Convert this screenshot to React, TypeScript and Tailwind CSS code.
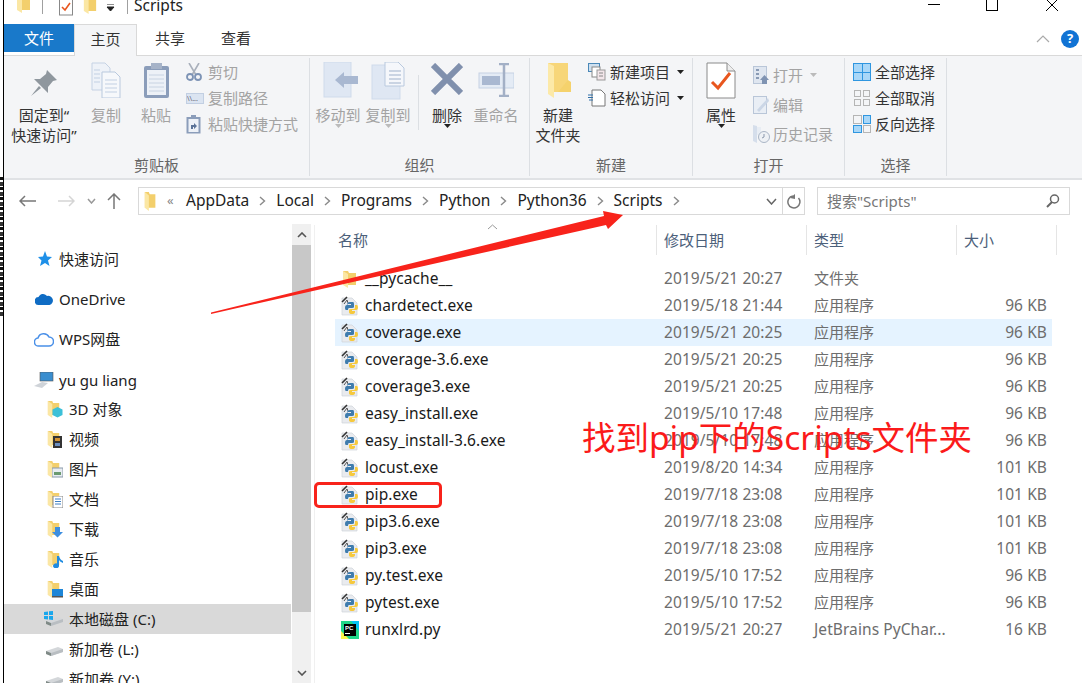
import type { ReactNode } from "react";

const FONT = "font-['Noto_Sans','Noto_Sans_CJK_SC',sans-serif]";

function Folder({ className = "w-[16px] h-[18px]" }: { className?: string }) {
  return (
    <svg className={className} viewBox="0 0 16 18" preserveAspectRatio="none">
      <path d="M1 1 L6 1 L7 3 L14 3 L14 15 L1 15 Z" fill="#f3cf6c" />
      <path d="M1 1 L6 4 L6 18 L1 15 Z" fill="#fbe7a4" />
    </svg>
  );
}

function PyIcon() {
  return (
    <svg className="w-[18px] h-[20px] shrink-0" viewBox="0 0 18 20">
      <path d="M1 2 H11 L16 7 V19 H1 Z" fill="#e9ebef" stroke="#cfd3d9" strokeWidth="0.7" />
      <path d="M1 6 L6 1" stroke="#333" strokeWidth="1.6" />
      <path d="M3 8 L6 4 L7 7" stroke="#555" strokeWidth="1" fill="none" />
      <path d="M6 9 Q6 6 9 6 H12 Q13 6 13 8 V11 Q13 12 11 12 H8 Q7 12 7 14 H5 Q4 14 4 12 Q4 9 6 9 H10 V8 H7" fill="#3f7cad" />
      <path d="M16 9 Q17 9 17 12 Q17 14 15 14 H11 V15 H14 V16 Q14 18 11 18 Q8 18 8 16 V14 Q8 13 10 13 H13 Q14 13 14 11 V9 Z" fill="#f6c93e" />
    </svg>
  );
}

function PcIcon() {
  return (
    <svg className="w-[18px] h-[18px] shrink-0" viewBox="0 0 18 18">
      <rect width="18" height="18" fill="#21d789" />
      <path d="M10 0 H18 V10 Z" fill="#07c3f2" />
      <path d="M0 10 L8 18 H0 Z" fill="#fcf84a" />
      <rect x="3" y="3" width="12" height="12" fill="#000" />
      <text x="4" y="9" fontSize="6" fontWeight="700" fill="#fff" fontFamily="Liberation Sans, sans-serif">PC</text>
      <rect x="4" y="12" width="5" height="1" fill="#fff" />
    </svg>
  );
}

function Big({ w, icon, lines, dim, caret }: { w: string; icon: ReactNode; lines: string[]; dim?: boolean; caret?: "dim" | "dark" }) {
  return (
    <div className={`${w} mt-[2px] flex flex-col items-center shrink-0`}>
      <div className="h-[43px] w-full flex items-start justify-center">{icon}</div>
      {lines.map((l) => (
        <div key={l} className={`h-[20px] leading-[20px] whitespace-nowrap text-[15px] ${dim ? "text-[#a3a3a3]" : "text-[#333]"}`}>{l}</div>
      ))}
      {caret && (
        <svg className="w-[7px] h-[4px] -mt-[1px]" viewBox="0 0 7 4">
          <path d="M0 0 H7 L3.5 4 Z" fill={caret === "dim" ? "#bbb" : "#222"} />
        </svg>
      )}
    </div>
  );
}

function Small({ icon, label, dim, slot, h, caret }: { icon: ReactNode; label: string; dim?: boolean; slot: string; h: string; caret?: "dim" | "dark" }) {
  return (
    <div className={`${h} flex items-center whitespace-nowrap text-[15px] ${dim ? "text-[#a3a3a3]" : "text-[#333]"}`}>
      <div className={`${slot} shrink-0 flex items-center`}>{icon}</div>
      <span>{label}</span>
      {caret && (
        <svg className="w-[7px] h-[4px] ml-[7px]" viewBox="0 0 7 4">
          <path d="M0 0 H7 L3.5 4 Z" fill={caret === "dim" ? "#bbb" : "#222"} />
        </svg>
      )}
    </div>
  );
}

function Group({ w, label, children }: { w: string; label: string; children: ReactNode }) {
  return (
    <div className={`${w} shrink-0 h-[118px] mt-[2px] border-r border-[#dcdfe3] flex flex-col`}>
      <div className="h-[97px] pt-[2px] flex">{children}</div>
      <div className="h-[20px] leading-[20px] text-center text-[15px] text-[#666]">{label}</div>
    </div>
  );
}

function Sep() {
  return (
    <svg className="w-[7px] h-[10px] mx-[10px] shrink-0" viewBox="0 0 7 10">
      <path d="M1 1 L5.5 5 L1 9" fill="none" stroke="#8a8a8a" strokeWidth="1.4" />
    </svg>
  );
}

const FILES = [
  { n: "__pycache__", d: "2019/5/21 20:27", t: "文件夹", s: "", kind: "folder" },
  { n: "chardetect.exe", d: "2019/5/18 21:44", t: "应用程序", s: "96 KB" },
  { n: "coverage.exe", d: "2019/5/21 20:25", t: "应用程序", s: "96 KB", hl: true },
  { n: "coverage-3.6.exe", d: "2019/5/21 20:25", t: "应用程序", s: "96 KB" },
  { n: "coverage3.exe", d: "2019/5/21 20:25", t: "应用程序", s: "96 KB" },
  { n: "easy_install.exe", d: "2019/5/10 17:48", t: "应用程序", s: "96 KB" },
  { n: "easy_install-3.6.exe", d: "2019/5/10 17:48", t: "应用程序", s: "96 KB" },
  { n: "locust.exe", d: "2019/8/20 14:34", t: "应用程序", s: "101 KB" },
  { n: "pip.exe", d: "2019/7/18 23:08", t: "应用程序", s: "101 KB" },
  { n: "pip3.6.exe", d: "2019/7/18 23:08", t: "应用程序", s: "101 KB" },
  { n: "pip3.exe", d: "2019/7/18 23:08", t: "应用程序", s: "101 KB" },
  { n: "py.test.exe", d: "2019/5/10 17:52", t: "应用程序", s: "96 KB" },
  { n: "pytest.exe", d: "2019/5/10 17:52", t: "应用程序", s: "96 KB" },
  { n: "runxlrd.py", d: "2019/5/21 20:27", t: "JetBrains PyChar...", s: "16 KB", kind: "pc" },
];

function Badge({ children }: { children: ReactNode }) {
  return <svg className="absolute left-[5px] top-[6px] w-[11px] h-[12px]" viewBox="0 0 11 12">{children}</svg>;
}

const LIBS: { label: string; badge: ReactNode }[] = [
  { label: "3D 对象", badge: <path d="M5.5 1 L10.5 3.5 V9 L5.5 11.5 L.5 9 V3.5 Z" fill="#3cc0d8" /> },
  { label: "视频", badge: <><rect x="1" y="0" width="9" height="12" fill="#333" /><rect x="3" y="2" width="5" height="3" fill="#d09030" /><rect x="3" y="7" width="5" height="3" fill="#6a8ec0" /></> },
  { label: "图片", badge: <><rect x="0" y="2" width="11" height="9" fill="#e8edf2" stroke="#8a99aa" /><rect x="2" y="6" width="7" height="3" fill="#6a9a70" /></> },
  { label: "文档", badge: <><rect x="1" y="0" width="10" height="12" fill="#fff" stroke="#888" /><path d="M3 3 H9 M3 5.5 H9 M3 8 H9" stroke="#3d7fc4" /></> },
  { label: "下载", badge: <path d="M3 1 H8 V6 H11 L5.5 11.5 L0 6 H3 Z" fill="#3c8ee0" /> },
  { label: "音乐", badge: <path d="M5 0 H7 Q8 4 11 5 V7 Q8 6 7 4 V9.5 A3 2.5 0 1 1 5 7.5 Z" fill="#1f8be0" /> },
  { label: "桌面", badge: <><rect x="0" y="3" width="11" height="7" fill="#1d86d8" /><rect x="0" y="10" width="11" height="1.5" fill="#555" /></> },
];

function Drive({ win }: { win?: boolean }) {
  return (
    <svg className="w-[20px] h-[16px] shrink-0" viewBox="0 0 20 16">
      <path d="M2 10 L14 6 L19 8 V11 L7 15 L2 13 Z" fill="#d4d7da" />
      <path d="M2 10 L7 12 V15 L2 13 Z" fill="#7f8a86" />
      <path d="M7 12 L19 8 V11 L7 15 Z" fill="#b9bec2" />
      {win && <path d="M0 1 L4 .5 V4 H0 Z M5 .3 L9 0 V4 H5 Z M0 5 H4 V8.5 L0 8 Z M5 5 H9 V9 L5 8.6 Z" fill="#1aa7ec" />}
    </svg>
  );
}

export default function App() {
  return (
    <div className={`${FONT} relative w-[1082px] h-[683px] overflow-hidden bg-white flex`}>
      {/* bit of the desktop left of the window */}
      <div className="w-[4px] shrink-0 border-r border-black flex flex-col">
        <div className="h-[177px]" />
        <div className="h-[140px] w-[3px] bg-[repeating-linear-gradient(180deg,#111_0px,#111_3px,#fff_3px,#fff_5px,#333_5px,#333_9px,#fff_9px,#fff_10px)]" />
      </div>

      <div className="flex-1 min-w-0 flex flex-col">
        {/* title bar */}
        <div className="h-[24px] shrink-0 overflow-hidden flex items-start relative">
          <Folder className="ml-[12px] -mt-[5px] w-[16px] h-[18px]" />
          <div className="ml-[10px] w-px h-[14px] bg-[#a0a0a0]" />
          <svg className="ml-[16px] w-[14px] h-[16px]" viewBox="0 0 14 16">
            <rect x=".5" y="-2" width="13" height="17" fill="#fff" stroke="#888" />
            <path d="M3 7 L6 10 L11 3" fill="none" stroke="#e8561e" strokeWidth="1.6" />
          </svg>
          <Folder className="ml-[10px] -mt-[4px] w-[15px] h-[18px]" />
          <svg className="ml-[8px] mt-[4px] w-[9px] h-[7px]" viewBox="0 0 9 7">
            <path d="M1 0 H8 M1 3 H8 L4.5 7 Z" stroke="#222" fill="#222" />
          </svg>
          <div className="ml-[12px] w-px h-[14px] bg-[#a0a0a0]" />
          <div className="ml-[6px] -mt-[5px] text-[15.5px] leading-[20px] text-[#222]">Scripts</div>
          <div className="ml-auto flex items-start">
            <div className="w-[12px] h-px bg-black mt-[4px] mr-[46px]" />
            <div className="w-[12px] h-[11px] border border-black border-t-0 mr-[48px]" />
            <svg className="w-[12px] h-[12px] -mt-[1px] mr-[24px]" viewBox="0 0 12 12">
              <path d="M0 0 L12 12 M12 0 L0 12" stroke="#000" strokeWidth="1" />
            </svg>
          </div>
        </div>

        {/* tabs */}
        <div className="h-[32px] shrink-0 flex items-start text-[15px] text-[#333] relative border-b border-[#d9d9d9]">
          <div className="w-[70px] h-[28px] bg-[#1979ca] text-white flex items-center justify-center">文件</div>
          <div className="w-[63px] h-[32px] bg-[#f4f5f7] border border-b-0 border-[#d9d9d9] flex items-center justify-center pb-[3px]">主页</div>
          <div className="w-[66px] h-[28px] flex items-center justify-center">共享</div>
          <div className="w-[66px] h-[28px] flex items-center justify-center">查看</div>
          <div className="ml-auto flex items-center h-[30px] mr-[3px]">
            <svg className="w-[14px] h-[8px] mr-[11px]" viewBox="0 0 14 8">
              <path d="M1 7 L7 1 L13 7" fill="none" stroke="#aaa" strokeWidth="1.2" />
            </svg>
            <div className="w-[18px] h-[18px] rounded-full bg-[#1173d4] text-white text-[13px] font-bold flex items-center justify-center">?</div>
          </div>
        </div>

        {/* ribbon */}
        <div className="h-[124px] shrink-0 bg-[#f4f5f7] border-b-2 border-[#e0e2e5] flex">
          <Group w="w-[306px]" label="剪贴板">
            <Big
              w="w-[80px]"
              lines={["固定到“", "快速访问”"]}
              icon={
                <svg className="w-[28px] h-[28px] mt-[7px]" viewBox="0 0 28 28">
                  <path d="M17 1 L27 11 L23 12 L18 18 L18 24 L4 10 L10 10 L16 5 Z" fill="#8f979e" />
                  <path d="M9 17 L1 27 L11 19 Z" fill="#8f979e" />
                </svg>
              }
            />
            <Big
              w="w-[44px]"
              dim
              lines={["复制"]}
              icon={
                <svg className="w-[30px] h-[36px]" viewBox="0 0 30 36">
                  <path d="M1 1 H14 L19 6 V28 H1 Z" fill="#eef2f8" stroke="#c5d2e4" />
                  <path d="M11 10 H24 L29 15 V36 H11 Z" fill="#f6f8fb" stroke="#b9c9de" />
                  <path d="M14 18 H26 M14 22 H26 M14 26 H26 M14 30 H26 M3 8 H9 M3 12 H9 M3 16 H9 M3 20 H9" stroke="#c2d0e3" />
                </svg>
              }
            />
            <Big
              w="w-[56px]"
              dim
              lines={["粘贴"]}
              icon={
                <svg className="w-[27px] h-[37px]" viewBox="0 0 27 37">
                  <rect x="1" y="4" width="25" height="32" rx="2" fill="#8b9dba" />
                  <rect x="4" y="8" width="19" height="25" fill="#edf1f7" />
                  <rect x="8" y="1" width="11" height="6" fill="#a6b3c8" />
                  <path d="M6 13 H21 M6 17 H21 M6 21 H21 M6 25 H21 M6 29 H21" stroke="#c8d3e2" />
                </svg>
              }
            />
            <div className="ml-[2px] -mt-[1px] flex flex-col">
              <Small
                dim
                slot="w-[22px]"
                h="h-[26px]"
                label="剪切"
                icon={
                  <svg className="w-[16px] h-[18px]" viewBox="0 0 16 18">
                    <path d="M3 0 L10 12 M13 0 L6 12" stroke="#a9b0bb" strokeWidth="1.6" />
                    <circle cx="4" cy="14" r="3" fill="none" stroke="#7d93b5" strokeWidth="1.8" />
                    <circle cx="12" cy="14" r="3" fill="none" stroke="#7d93b5" strokeWidth="1.8" />
                  </svg>
                }
              />
              <Small
                dim
                slot="w-[22px]"
                h="h-[26px]"
                label="复制路径"
                icon={
                  <div className="w-[18px] h-[11px] bg-[#dbe4f1] border border-[#c2cfe2] text-[7px] leading-[9px] text-[#667] overflow-hidden">\\...</div>
                }
              />
              <Small
                dim
                slot="w-[22px]"
                h="h-[26px]"
                label="粘贴快捷方式"
                icon={
                  <svg className="w-[15px] h-[19px]" viewBox="0 0 15 19">
                    <rect x=".5" y="2" width="14" height="16.5" fill="#8b9dba" />
                    <rect x="2.5" y="4" width="10" height="13" fill="#edf1f7" />
                    <rect x="5" y="0" width="5" height="3" fill="#8b9dba" />
                    <path d="M5 14 V10 H8 V8 L11 11 L8 14 V12 H7 V14 Z" fill="#5b7398" />
                  </svg>
                }
              />
            </div>
          </Group>

          <Group w="w-[220px]" label="组织">
            <Big
              w="w-[56px]"
              dim
              caret="dim"
              lines={["移动到"]}
              icon={
                <svg className="w-[36px] h-[36px] ml-[6px]" viewBox="0 0 36 36">
                  <rect x="1" y="0" width="27" height="35" fill="#dfe7f3" stroke="#cfdbeb" />
                  <path d="M12 18 L21 10 V14 H35 V22 H21 V26 Z" fill="#a9b8d1" />
                </svg>
              }
            />
            <Big
              w="w-[44px]"
              dim
              caret="dim"
              lines={["复制到"]}
              icon={
                <svg className="w-[34px] h-[38px]" viewBox="0 0 34 38">
                  <rect x="1" y="3" width="28" height="34" fill="#dfe7f3" stroke="#cfdbeb" />
                  <path d="M14 0 H27 L33 6 V24 H14 Z" fill="#f5f7fb" stroke="#b9c9de" />
                  <path d="M18 9 H30 M18 13 H30 M18 17 H30 M18 21 H30" stroke="#9fb1cb" />
                </svg>
              }
            />
            <div className="w-[9px] shrink-0 flex justify-end pt-[15px]">
              <div className="w-px h-[55px] bg-[#dcdfe3]" />
            </div>
            <Big
              w="w-[56px]"
              caret="dark"
              lines={["删除"]}
              icon={
                <svg className="w-[32px] h-[32px] mt-[1px]" viewBox="0 0 32 32">
                  <path d="M2 2 L30 30 M30 2 L2 30" stroke="#8090ad" strokeWidth="6" />
                </svg>
              }
            />
            <Big
              w="w-[42px]"
              dim
              lines={["重命名"]}
              icon={
                <svg className="w-[36px] h-[34px] mt-[1px]" viewBox="0 0 36 34">
                  <rect x="1" y="10" width="35" height="15" fill="#e4ebf5" stroke="#c5d2e4" />
                  <rect x="4" y="13" width="18" height="9" fill="#a9b8d1" />
                  <path d="M21 1 H31 M26 1 V33 M21 33 H31" fill="none" stroke="#a3b0c6" strokeWidth="2.5" />
                </svg>
              }
            />
          </Group>

          <Group w="w-[163px]" label="新建">
            <Big
              w="w-[56px]"
              lines={["新建", "文件夹"]}
              icon={
                <svg className="w-[25px] h-[36px]" viewBox="0 0 25 36">
                  <path d="M2 1 H22 V30 L8 30 L2 30 Z" fill="#f7d679" />
                  <path d="M2 1 L8 4 V36 L2 32 Z" fill="#fce9a8" />
                  <path d="M22 18 L25 20 V30 H12 Z" fill="#f5d26c" />
                </svg>
              }
            />
            <div className="ml-[2px] -mt-[1px] flex flex-col">
              <Small
                slot="w-[22px]"
                h="h-[26px]"
                label="新建项目"
                caret="dark"
                icon={
                  <svg className="w-[18px] h-[18px]" viewBox="0 0 18 18">
                    <rect x=".5" y=".5" width="11" height="8" fill="#cfe0ef" stroke="#4a88b8" />
                    <rect x="4" y="4" width="8" height="10" fill="#fff" stroke="#888" />
                    <rect x="9" y="7" width="8" height="10" fill="#f3e6ea" stroke="#999" />
                    <path d="M11 10 H15 M11 13 H15" stroke="#888" />
                  </svg>
                }
              />
              <Small
                slot="w-[22px]"
                h="h-[26px]"
                label="轻松访问"
                caret="dark"
                icon={
                  <svg className="w-[18px] h-[18px]" viewBox="0 0 18 18">
                    <path d="M4 1 H13 L17 5 V17 H4 Z" fill="#fff" stroke="#777" />
                    <path d="M0 6 H5 M0 8.5 H5 M1 11 H5" stroke="#2f6fa8" strokeWidth="1" />
                  </svg>
                }
              />
            </div>
          </Group>

          <Group w="w-[152px]" label="打开">
            <Big
              w="w-[56px]"
              caret="dark"
              lines={["属性"]}
              icon={
                <svg className="w-[30px] h-[37px]" viewBox="0 0 30 37">
                  <path d="M1 1 H21 L29 9 V36 H1 Z" fill="#fff" stroke="#8a8a8a" />
                  <path d="M21 1 V9 H29" fill="#eee" stroke="#8a8a8a" />
                  <path d="M6 20 L12 26 L24 11" fill="none" stroke="#e8561e" strokeWidth="3" />
                </svg>
              }
            />
            <div className="ml-[4px] flex flex-col">
              <Small
                dim
                slot="w-[20px]"
                h="h-[30px]"
                label="打开"
                caret="dim"
                icon={
                  <svg className="w-[17px] h-[18px]" viewBox="0 0 17 18">
                    <rect x=".5" y=".5" width="13" height="17" fill="#dfe6f0" stroke="#b9c6d8" />
                    <path d="M3 4 H6 M3 8 H6 M3 12 H6" stroke="#8a9bb5" strokeWidth="2" />
                    <path d="M7 14 L11.5 9 L16 14 H14 V18 H9 V14 Z" fill="#7f93b2" />
                  </svg>
                }
              />
              <Small
                dim
                slot="w-[20px]"
                h="h-[30px]"
                label="编辑"
                icon={
                  <svg className="w-[17px] h-[18px]" viewBox="0 0 17 18">
                    <rect x=".5" y=".5" width="13" height="17" fill="#e9eef5" stroke="#b9c6d8" />
                    <path d="M4 14 L15 2 L16 5 L6 16 Z" fill="#cbd6e6" />
                  </svg>
                }
              />
              <Small
                dim
                slot="w-[20px]"
                h="h-[28px]"
                label="历史记录"
                icon={
                  <svg className="w-[17px] h-[18px]" viewBox="0 0 17 18">
                    <path d="M0 0 L4 1 V18 L0 16 Z" fill="#d5deeb" />
                    <path d="M4 2 H8 V10 H4 Z" fill="#e8edf4" />
                    <circle cx="11" cy="12" r="5.5" fill="#eef1f5" stroke="#aab5c5" />
                    <path d="M11 9 V12 L9 13" stroke="#8a97ab" fill="none" />
                  </svg>
                }
              />
            </div>
          </Group>

          <Group w="w-[102px]" label="选择">
            <div className="ml-[8px] -mt-[1px] flex flex-col">
              <Small
                slot="w-[22px]"
                h="h-[26px]"
                label="全部选择"
                icon={
                  <div className="w-[18px] h-[18px] grid grid-cols-2 gap-px bg-[#2f96e0] p-px">
                    <div className="bg-[#a9d7f8]" />
                    <div className="bg-[#a9d7f8]" />
                    <div className="bg-[#a9d7f8]" />
                    <div className="bg-[#a9d7f8]" />
                  </div>
                }
              />
              <Small
                slot="w-[22px]"
                h="h-[26px]"
                label="全部取消"
                icon={
                  <div className="w-[16px] h-[16px] ml-px grid grid-cols-2 gap-[2px]">
                    <div className="border border-[#b5b5b5]" />
                    <div className="border border-[#b5b5b5]" />
                    <div className="border border-[#b5b5b5]" />
                    <div className="border border-[#b5b5b5]" />
                  </div>
                }
              />
              <Small
                slot="w-[22px]"
                h="h-[26px]"
                label="反向选择"
                icon={
                  <div className="w-[18px] h-[18px] grid grid-cols-2 gap-px">
                    <div className="border border-[#b5b5b5]" />
                    <div className="border border-[#2f96e0] bg-[#a9d7f8]" />
                    <div className="border border-[#2f96e0] bg-[#a9d7f8]" />
                    <div className="border border-[#b5b5b5]" />
                  </div>
                }
              />
            </div>
          </Group>
        </div>

        {/* address bar */}
        <div className="h-[45px] shrink-0 flex items-start pt-[7px]">
          <div className="w-[134px] h-[28px] shrink-0 flex items-center">
            <svg className="ml-[15px] w-[18px] h-[12px]" viewBox="0 0 18 12">
              <path d="M6 1 L1 6 L6 11 M1 6 H17" fill="none" stroke="#777" strokeWidth="1.5" />
            </svg>
            <svg className="ml-[20px] w-[18px] h-[12px]" viewBox="0 0 18 12">
              <path d="M12 1 L17 6 L12 11 M17 6 H1" fill="none" stroke="#d5d5d5" strokeWidth="1.5" />
            </svg>
            <svg className="ml-[12px] w-[9px] h-[6px]" viewBox="0 0 9 6">
              <path d="M1 1 L4.5 5 L8 1" fill="none" stroke="#999" strokeWidth="1.5" />
            </svg>
            <svg className="ml-[11px] w-[14px] h-[16px]" viewBox="0 0 14 16">
              <path d="M1 7 L7 1 L13 7 M7 1 V16" fill="none" stroke="#777" strokeWidth="1.5" />
            </svg>
          </div>
          <div className="w-[667px] h-[28px] shrink-0 border border-[#d9d9d9] flex items-center text-[15.5px] text-[#222]">
            <Folder className="ml-[5px] w-[13px] h-[20px]" />
            <span className="ml-[10px] w-[19px] text-[#888] text-[13px]">«</span>
            <span>AppData</span>
            <Sep />
            <span>Local</span>
            <Sep />
            <span>Programs</span>
            <Sep />
            <span>Python</span>
            <Sep />
            <span>Python36</span>
            <Sep />
            <span>Scripts</span>
            <Sep />
            <div className="ml-auto w-[22px] h-full flex items-center justify-center border-r border-[#d9d9d9]">
              <svg className="w-[11px] h-[7px]" viewBox="0 0 11 7">
                <path d="M1 1 L5.5 6 L10 1" fill="none" stroke="#666" strokeWidth="1.5" />
              </svg>
            </div>
            <div className="w-[21px] h-full flex items-center justify-center">
              <svg className="w-[15px] h-[15px]" viewBox="0 0 15 15">
                <path d="M5 2.5 A6 6 0 1 0 11 2.5" fill="none" stroke="#777" strokeWidth="1.5" transform="rotate(20 7.5 7.5)" />
                <path d="M9 0 L9 5 L4 4 Z" fill="#777" />
              </svg>
            </div>
          </div>
          <div className="ml-[12px] w-[253px] h-[28px] shrink-0 border border-[#d9d9d9] flex items-center px-[9px] text-[15px] text-[#777]">
            <span>搜索"Scripts"</span>
            <svg className="ml-auto w-[14px] h-[14px]" viewBox="0 0 14 14">
              <circle cx="8.5" cy="5" r="4" fill="none" stroke="#666" strokeWidth="1.5" />
              <path d="M6 8 L1 13" stroke="#666" strokeWidth="2" />
            </svg>
          </div>
        </div>

        {/* body */}
        <div className="flex-1 min-h-0 flex">
          <div className="w-[288px] shrink-0 pt-[19px] text-[15px] text-[#222] overflow-hidden">
            <div className="h-[30px] pl-[32px] flex items-center">
              <svg className="w-[16px] h-[16px] mr-[7px]" viewBox="0 0 16 16">
                <path d="M9 0 L11 5.5 L16 6 L12 9.5 L13.5 15 L9 12 L4 15 L5.5 9.5 L2 6 L7 5.5 Z" fill="#1e90e8" />
              </svg>
              快速访问
            </div>
            <div className="h-[30px] mt-[10px] pl-[31px] flex items-center">
              <svg className="w-[18px] h-[12px] mr-[6px]" viewBox="0 0 18 12">
                <path d="M4 12 A4 4 0 0 1 3.5 4 A5 5 0 0 1 12 3 A4.5 4.5 0 0 1 14.5 12 Z" fill="#0f6cc4" />
              </svg>
              OneDrive
            </div>
            <div className="h-[30px] mt-[10px] pl-[30px] flex items-center">
              <svg className="w-[20px] h-[16px] mr-[5px]" viewBox="0 0 20 16">
                <path d="M5 15 A4 4 0 0 1 4 7 A6 6 0 0 1 15 6 A4.5 4.5 0 0 1 15 15 Z" fill="none" stroke="#4a90e8" strokeWidth="1.5" />
              </svg>
              WPS网盘
            </div>
            <div className="h-[30px] mt-[11px] -mb-[1px] pl-[30px] flex items-center">
              <svg className="w-[20px] h-[16px] mr-[5px]" viewBox="0 0 20 16">
                <rect x="6" y="0" width="13" height="9" fill="#3a8ecf" stroke="#555" strokeWidth=".6" />
                <path d="M0 14 L8 10 L14 11 L8 16 Z" fill="#cfd3d8" />
              </svg>
              yu gu liang
            </div>
            {LIBS.map((l) => (
              <div key={l.label} className="h-[30px] pl-[43px] flex items-center">
                <div className="relative w-[16px] h-[18px] mr-[6px]">
                  <Folder className="w-[14px] h-[18px]" />
                  <Badge>{l.badge}</Badge>
                </div>
                {l.label}
              </div>
            ))}
            <div className="h-[30px] w-[287px] bg-[#d9d9d9] pl-[40px] flex items-center">
              <div className="mr-[5px]"><Drive win /></div>
              本地磁盘 (C:)
            </div>
            <div className="h-[30px] pl-[40px] flex items-center">
              <div className="mr-[5px]"><Drive /></div>
              新加卷 (L:)
            </div>
            <div className="h-[30px] pl-[40px] flex items-center">
              <div className="mr-[5px]"><Drive /></div>
              新加卷 (Y:)
            </div>
          </div>

          {/* nav scrollbar */}
          <div className="w-[19px] shrink-0 -mt-px bg-[#f0f0f0] flex flex-col">
            <div className="h-[21px] flex items-center justify-center">
              <svg className="w-[10px] h-[6px]" viewBox="0 0 10 6">
                <path d="M1 5 L5 1 L9 5" fill="none" stroke="#555" strokeWidth="1.6" />
              </svg>
            </div>
            <div className="h-[367px] bg-[#c8c8c8]" />
            <div className="flex-1 flex items-center justify-center pb-[2px] pt-[52px]">
              <svg className="w-[10px] h-[6px]" viewBox="0 0 10 6">
                <path d="M1 1 L5 5 L9 1" fill="none" stroke="#555" strokeWidth="1.6" />
              </svg>
            </div>
          </div>
          <div className="w-[4px] shrink-0 border-r border-[#f0f0f0]" />

          {/* file list */}
          <div className="flex-1 min-w-0 pl-[20px]">
            <div className="h-[30px] flex text-[15px] text-[#4c607a] relative">
              <div className="w-[322px] pl-[3px] border-r border-[#e5e5e5] flex items-center">名称</div>
              <div className="w-[150px] pl-[7px] border-r border-[#e5e5e5] flex items-center">修改日期</div>
              <div className="w-[150px] pl-[7px] border-r border-[#e5e5e5] flex items-center">类型</div>
              <div className="w-[100px] pl-[7px] border-r border-[#e5e5e5] flex items-center">大小</div>
              <svg className="absolute left-[152px] -top-[1px] w-[11px] h-[6px]" viewBox="0 0 11 6">
                <path d="M1 5 L5.5 1 L10 5" fill="none" stroke="#999" />
              </svg>
            </div>
            <div className="pt-[10px]">
              {FILES.map((f) => (
                <div
                  key={f.n}
                  className={`w-[717px] h-[27px] flex items-center pl-[6px] text-[15.5px] tracking-[0.005em] ${f.hl ? "bg-[#e5f3ff]" : ""}`}
                >
                  <div className="w-[18px] h-[20px] flex items-center justify-center shrink-0">
                    {f.kind === "folder" ? <Folder /> : f.kind === "pc" ? <PcIcon /> : <PyIcon />}
                  </div>
                  <div className="w-[305px] pl-[6px] text-[#1a1a1a] whitespace-nowrap shrink-0">{f.n}</div>
                  <div className="w-[150px] text-[#6d6d6d] whitespace-nowrap shrink-0">{f.d}</div>
                  <div className={`w-[150px] text-[#6d6d6d] whitespace-nowrap shrink-0 ${f.kind === "pc" ? "" : "text-[15px] tracking-normal"}`}>{f.t}</div>
                  <div className="w-[88px] pr-[5px] text-right text-[#6d6d6d] whitespace-nowrap shrink-0">{f.s}</div>
                </div>
              ))}
            </div>
          </div>
        </div>
      </div>

      {/* red markup drawn on top of the screenshot */}
      <svg className="absolute left-0 top-0 w-[1082px] h-[683px] pointer-events-none" viewBox="0 0 1082 683">
        <path d="M211 312.5 L604 216 L603 211 L623 215 L608 229 L606 225 L211 314 Z" fill="#f8231b" />
      </svg>
      <div className="absolute left-[314px] top-[482px] w-[128px] h-[26px] border-[3px] border-[#f8231b] rounded-[5px]" />
      <div className="absolute left-[582px] top-[414px] text-[33.5px] leading-[46px] text-[#fb1a1a] whitespace-nowrap">找到pip下的Scripts文件夹</div>
    </div>
  );
}
